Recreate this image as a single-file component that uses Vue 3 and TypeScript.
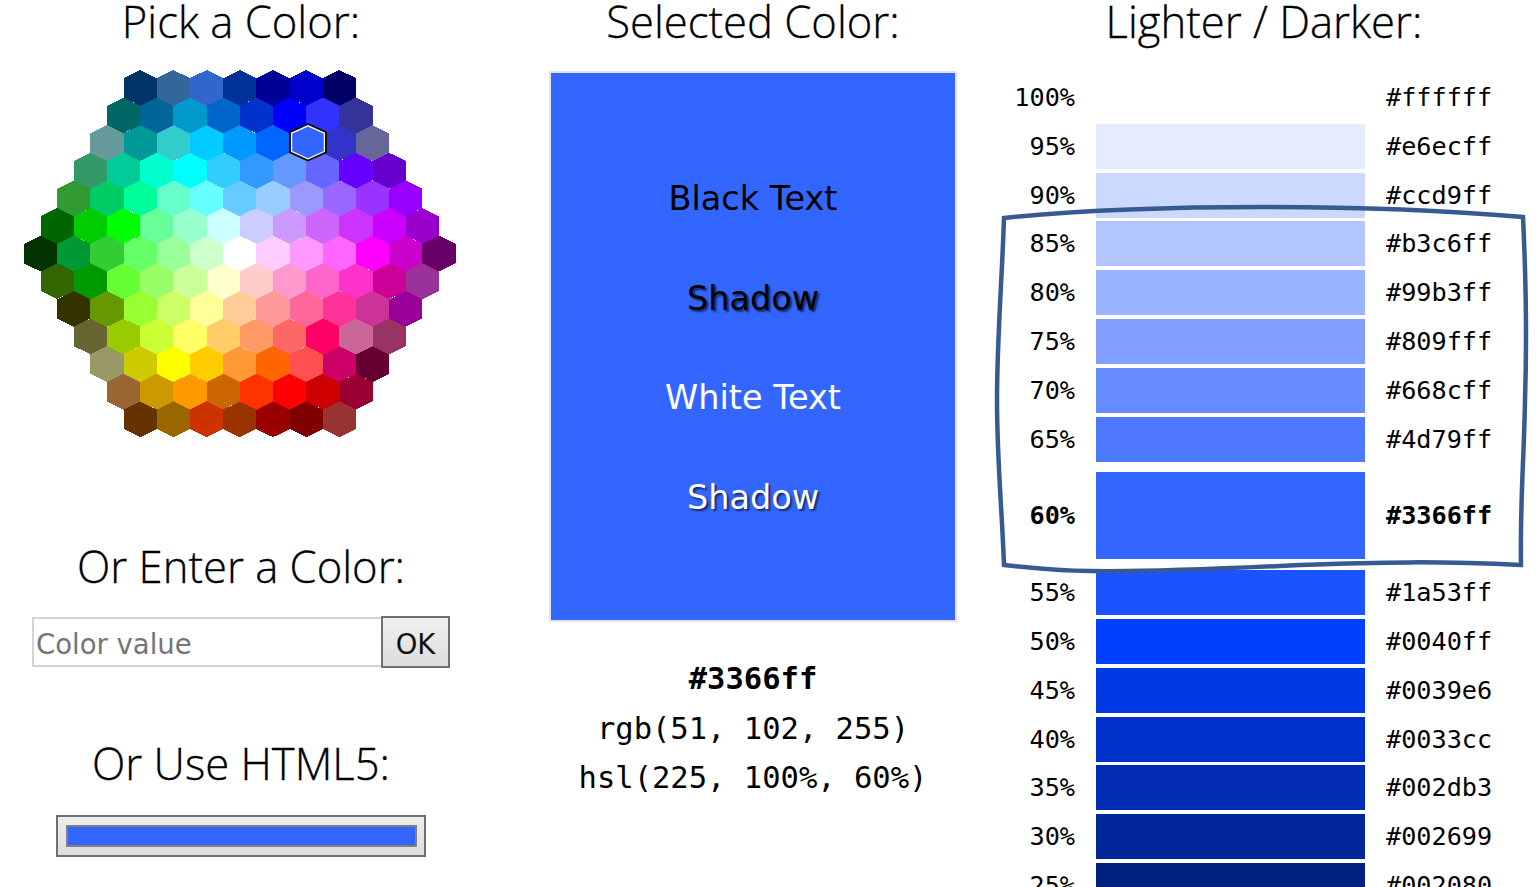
<script setup lang="ts">
const hexRows: string[][] = [
  ['#003366','#336699','#3366CC','#003399','#000099','#0000CC','#000066'],
  ['#006666','#006699','#0099CC','#0066CC','#0033CC','#0000FF','#3333FF','#333399'],
  ['#669999','#009999','#33CCCC','#00CCFF','#0099FF','#0066FF','#3366FF','#3333CC','#666699'],
  ['#339966','#00CC99','#00FFCC','#00FFFF','#33CCFF','#3399FF','#6699FF','#6666FF','#6600FF','#6600CC'],
  ['#339933','#00CC66','#00FF99','#66FFCC','#66FFFF','#66CCFF','#99CCFF','#9999FF','#9966FF','#9933FF','#9900FF'],
  ['#006600','#00CC00','#00FF00','#66FF99','#99FFCC','#CCFFFF','#CCCCFF','#CC99FF','#CC66FF','#CC33FF','#CC00FF','#9900CC'],
  ['#003300','#009933','#33CC33','#66FF66','#99FF99','#CCFFCC','#FFFFFF','#FFCCFF','#FF99FF','#FF66FF','#FF00FF','#CC00CC','#660066'],
  ['#336600','#009900','#66FF33','#99FF66','#CCFF99','#FFFFCC','#FFCCCC','#FF99CC','#FF66CC','#FF33CC','#CC0099','#993399'],
  ['#333300','#669900','#99FF33','#CCFF66','#FFFF99','#FFCC99','#FF9999','#FF6699','#FF3399','#CC3399','#990099'],
  ['#666633','#99CC00','#CCFF33','#FFFF66','#FFCC66','#FF9966','#FF6666','#FF0066','#CC6699','#993366'],
  ['#999966','#CCCC00','#FFFF00','#FFCC00','#FF9933','#FF6600','#FF5050','#CC0066','#660033'],
  ['#996633','#CC9900','#FF9900','#CC6600','#FF3300','#FF0000','#CC0000','#990033'],
  ['#663300','#996600','#CC3300','#993300','#990000','#800000','#993333'],
]

const W = 33.2
const ROW = 27.62
const LEFT = 24
const TIP = 8.2
const SIDE = 19.4

function hexPoints(cx: number, top: number, w = W, tip = TIP, side = SIDE): string {
  const h = w / 2
  return [
    [cx, top],
    [cx + h, top + tip],
    [cx + h, top + tip + side],
    [cx, top + 2 * tip + side],
    [cx - h, top + tip + side],
    [cx - h, top + tip],
  ].map((p) => p.join(',')).join(' ')
}

const hexes = hexRows.flatMap((row, r) => {
  const start = LEFT + ((13 - row.length) * W) / 2
  return row.map((color, i) => ({
    color,
    points: hexPoints(start + (i + 0.5) * W, r * ROW),
  }))
})

const selectorOuter = hexPoints(308, 53, 38, 8.6, 21.4)
const selectorWhite = hexPoints(308, 55, 34, 7.8, 19)
const selectorInner = hexPoints(308, 56.5, 31.6, 7.2, 17.4)

const shades = [
  { pct: 100, hex: '#ffffff' }, { pct: 95, hex: '#e6ecff' }, { pct: 90, hex: '#ccd9ff' },
  { pct: 85, hex: '#b3c6ff' }, { pct: 80, hex: '#99b3ff' }, { pct: 75, hex: '#809fff' },
  { pct: 70, hex: '#668cff' }, { pct: 65, hex: '#4d79ff' }, { pct: 60, hex: '#3366ff' },
  { pct: 55, hex: '#1a53ff' }, { pct: 50, hex: '#0040ff' }, { pct: 45, hex: '#0039e6' },
  { pct: 40, hex: '#0033cc' }, { pct: 35, hex: '#002db3' }, { pct: 30, hex: '#002699' },
  { pct: 25, hex: '#002080' },
]
</script>

<template>
  <main class="page">
    <section class="col col-pick">
      <h2 class="title">Pick a Color:</h2>
      <svg class="hexmap" viewBox="0 0 482 368" width="482" height="368">
        <polygon v-for="h in hexes" :key="h.color" :points="h.points" :fill="h.color" shape-rendering="crispEdges" />
        <polygon :points="selectorOuter" fill="#111" />
        <polygon :points="selectorWhite" fill="#fff" />
        <polygon :points="selectorInner" fill="#3366ff" />
      </svg>
      <h2 class="title title-enter">Or Enter a Color:</h2>
      <div class="enter">
        <input class="enter-input" type="text" placeholder="Color value" />
        <button class="enter-btn" type="button">OK</button>
      </div>
      <h2 class="title title-html">Or Use HTML5:</h2>
      <input class="native" type="color" value="#3366ff" />
    </section>

    <section class="col col-selected">
      <h2 class="title">Selected Color:</h2>
      <div class="swatch">
        <div class="swatch-line black">Black Text</div>
        <div class="swatch-line black shadow-dark">Shadow</div>
        <div class="swatch-line white">White Text</div>
        <div class="swatch-line white shadow-dark">Shadow</div>
      </div>
      <div class="values">
        <div class="bold">#3366ff</div>
        <div>rgb(51, 102, 255)</div>
        <div>hsl(225, 100%, 60%)</div>
      </div>
    </section>

    <section class="col col-shades">
      <h2 class="title">Lighter / Darker:</h2>
      <div class="shades">
        <div v-for="s in shades" :key="s.pct" class="shade" :class="{ current: s.pct === 60 }">
          <span class="pct">{{ s.pct }}%</span>
          <span class="bar" :style="{ background: s.hex }"></span>
          <span class="hex">{{ s.hex }}</span>
        </div>
      </div>
      <svg class="scribble" viewBox="994 0 544 887" width="544" height="887" aria-hidden="true">
        <path
          d="M1004 218 C1090 209 1180 207 1264 207 C1350 207 1440 210 1523 217 C1526 280 1527 340 1525 400 C1524 460 1520 500 1521 565 C1440 561 1380 562 1300 565 C1220 569 1150 572 1090 571 C1060 571 1030 568 1004 565 C1002 510 997 460 997 400 C997 340 1002 280 1004 218 Z"
          fill="none" stroke="#375a93" stroke-width="4.5" stroke-linejoin="miter"
        />
      </svg>
    </section>
  </main>
</template>

<style>
html, body { margin: 0; height: 887px; overflow: hidden; background: #fff; }
</style>

<style scoped>
.page { display: flex; width: 1538px; height: 887px; overflow: hidden; color: #000; }
.col { display: flex; flex-direction: column; align-items: center; flex: none; position: relative; }
.col-pick { width: 482px; margin-right: 30px; }
.col-selected { width: 482px; }
.col-shades { width: 540px; }
.title {
  flex: none; margin: 0; height: 44px; font: 300 43.6px/42px "Open Sans", sans-serif;
  white-space: nowrap; color: #000; -webkit-text-stroke: 0.3px #000;
}
.hexmap { display: block; flex: none; margin-top: 26px; }
.title-enter { margin-top: 107px; }
.enter { display: flex; flex: none; margin-top: 27px; width: 418px; height: 52px; align-items: stretch; }
.enter-input {
  flex: 1; min-width: 0; box-sizing: border-box; height: 50px; margin-top: 1px; padding: 4px 2px 0; border: 2px solid #d4d4d4; border-right: none;
  font: 27.5px "DejaVu Sans", sans-serif; outline: none; background: #fff;
}
.enter-input::placeholder { color: #757575; opacity: 1; }
.enter-btn {
  width: 69px; box-sizing: border-box; padding: 3px 0 0; border: 2px solid #707070; border-radius: 0;
  background: linear-gradient(#f1f1f1, #dcdcdc); font: 27.5px "DejaVu Sans", sans-serif; color: #111;
}
.title-html { margin-top: 74px; }
.native {
  -webkit-appearance: none; appearance: none; display: block; flex: none; box-sizing: border-box;
  width: 370px; height: 42px; margin-top: 29px; padding: 8px 7px 8px 8px; border: 2px solid #707070; border-radius: 0;
  background: linear-gradient(#ededed, #dddddd);
}
.native::-webkit-color-swatch-wrapper { padding: 0; }
.native::-webkit-color-swatch { border: 2px solid #808080; border-radius: 0; }
.swatch {
  flex: none; box-sizing: border-box; width: 408px; height: 551px; margin-top: 27px; padding-top: 76px;
  border: 2px solid #e4e4e4; background: #3366ff; text-align: center;
  font: 33.5px/99.6px "DejaVu Sans", sans-serif;
}
.swatch-line { height: 99.6px; }
.black { color: #000; }
.white { color: #fff; }
.shadow-dark { text-shadow: 2px 2px 2px rgba(0, 0, 0, 0.6); }
.values { flex: none; margin-top: 32px; text-align: center; font: 30.5px/49.5px "DejaVu Sans Mono", monospace; }
.bold { font-weight: 700; }
.shades { display: flex; flex: none; flex-direction: column; gap: 3.8px; margin-top: 31px; width: 100%; }
.shade { display: flex; align-items: center; flex: none; font: 25.2px "DejaVu Sans Mono", monospace; }
.shade.current { margin: 7px 0; font-weight: 700; }
.pct { width: 81px; text-align: right; flex: none; }
.bar { width: 269px; height: 45px; flex: none; margin-left: 21px; }
.current .bar { height: 87px; }
.hex { margin-left: 21px; flex: none; }
.scribble { position: absolute; left: 0; top: 0; pointer-events: none; overflow: visible; }
</style>
